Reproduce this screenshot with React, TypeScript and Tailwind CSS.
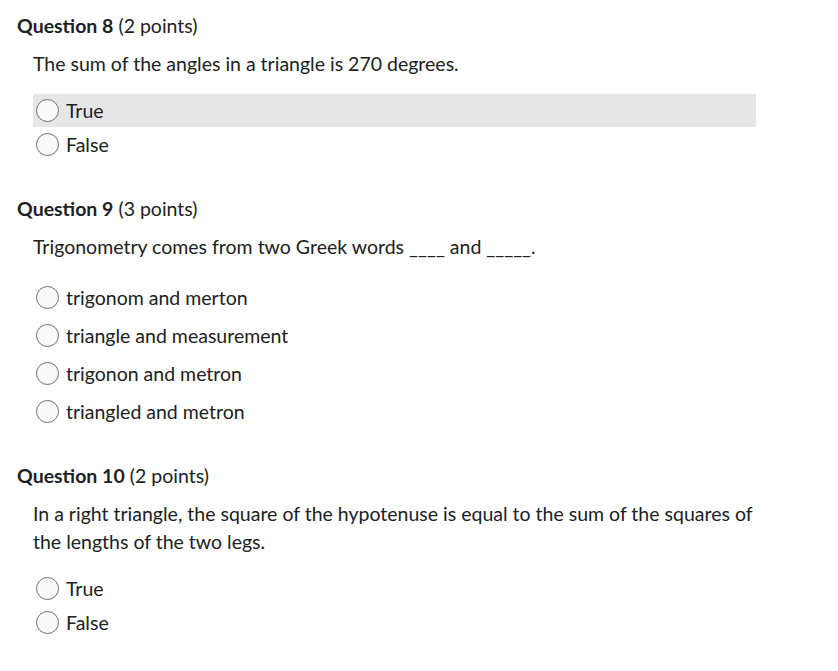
import React from 'react'

type Question = {
  num: number
  points: number
  text: string
  options: string[]
  spacing: 'tight' | 'loose'
  hovered?: number
}

const questions: Question[] = [
  { num: 8, points: 2, text: 'The sum of the angles in a triangle is 270 degrees.', options: ['True', 'False'], spacing: 'tight', hovered: 0 },
  {
    num: 9,
    points: 3,
    text: 'Trigonometry comes from two Greek words ____ and _____.',
    options: ['trigonom and merton', 'triangle and measurement', 'trigonon and metron', 'triangled and metron'],
    spacing: 'loose',
  },
  {
    num: 10,
    points: 2,
    text: 'In a right triangle, the square of the hypotenuse is equal to the sum of the squares of the lengths of the two legs.',
    options: ['True', 'False'],
    spacing: 'tight',
  },
]

function Radio() {
  return <span className="w-[23px] h-[23px] rounded-full border border-[#6f6f6f] bg-[#f9fafc] shrink-0" />
}

export default function App() {
  return (
    <div className="w-[838px] h-[671px] bg-white text-[#202122] font-['Lato','Noto_Sans',sans-serif] text-[19.5px] pl-[17px] pt-[13px]">
      {questions.map((q) => (
        <div key={q.num} className="mb-[35px]">
          <h3 className="leading-[26px]">
            <span className="font-bold">Question {q.num}</span> ({q.points} points)
          </h3>
          <p className="pl-[16px] pr-[70px] mt-[11px] leading-[28px]">{q.text}</p>
          <div className={q.spacing === 'tight' ? 'mt-[16px] flex flex-col gap-[1px]' : 'mt-[20px] flex flex-col gap-[5px]'}>
            {q.options.map((opt, i) => (
              <label
                key={opt}
                className={`ml-[16px] w-[723px] h-[33px] flex items-center gap-[7px] pl-[3px] ${
                  q.hovered === i ? 'bg-[#e6e6e6]' : ''
                }`}
              >
                <Radio />
                <span>{opt}</span>
              </label>
            ))}
          </div>
        </div>
      ))}
    </div>
  )
}
